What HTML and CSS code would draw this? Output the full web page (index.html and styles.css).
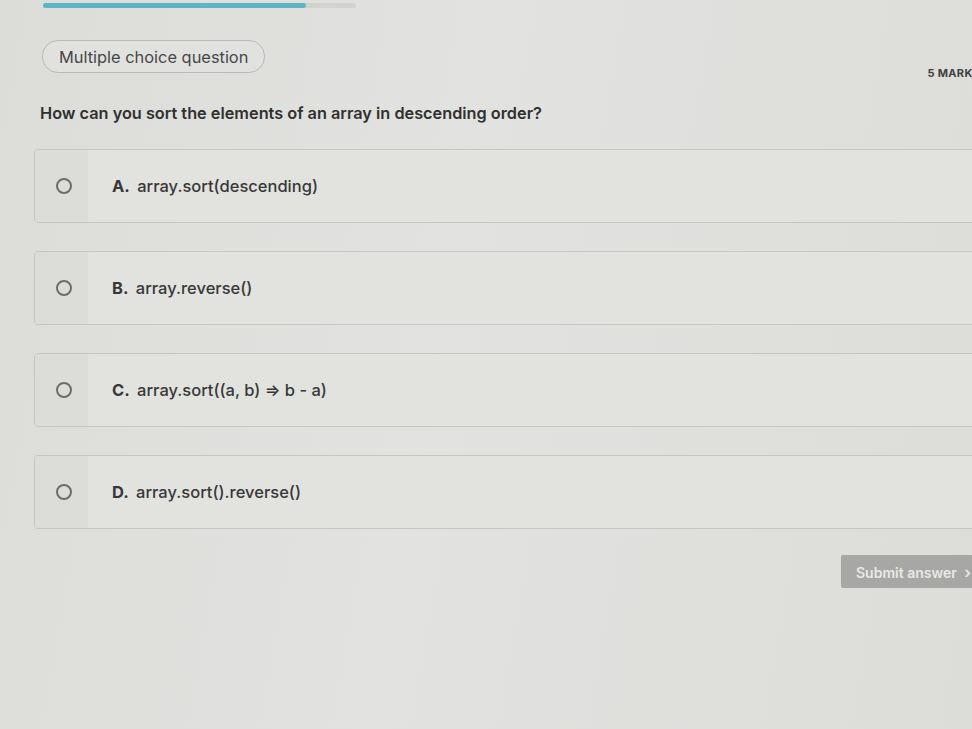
FILE: index.html
```html
<!DOCTYPE html>
<html>
<head>
<meta charset="utf-8">
<link rel="stylesheet" href="styles.css">
</head>
<body>
<div class="page">
  <div class="progress"><div class="progress-fill"></div></div>
  <div class="header">
    <span class="pill">Multiple choice question</span>
    <span class="marks">5 MARKS</span>
  </div>
  <p class="question">How can you sort the elements of an array in descending order?</p>
  <div class="options">
    <div class="option">
      <div class="radio-pane"><span class="radio"></span></div>
      <div class="label"><b>A.</b> array.sort(descending)</div>
    </div>
    <div class="option">
      <div class="radio-pane"><span class="radio"></span></div>
      <div class="label"><b>B.</b> array.reverse()</div>
    </div>
    <div class="option">
      <div class="radio-pane"><span class="radio"></span></div>
      <div class="label"><b>C.</b> array.sort((a, b) ⇒ b - a)</div>
    </div>
    <div class="option">
      <div class="radio-pane"><span class="radio"></span></div>
      <div class="label"><b>D.</b> array.sort().reverse()</div>
    </div>
  </div>
  <div class="actions">
    <button class="submit">Submit answer <span class="chev">›</span></button>
  </div>
</div>
</body>
</html>
```

FILE: styles.css
```css
html, body {
  margin: 0;
  padding: 0;
  height: 100%;
  overflow: hidden;
}
body {
  background: linear-gradient(100deg, #dcdcd9 0%, #e2e3e0 45%, #dcdcd9 100%);
  font-family: Inter, "Noto Sans", "Liberation Sans", sans-serif;
  color: #333;
}
.page {
  padding: 3px 0 0 34px;
}
.progress {
  margin-left: 9px;
  width: 313px;
  height: 5px;
  background: #d2d3d1;
  border-radius: 3px;
}
.progress-fill {
  width: 263px;
  height: 100%;
  background: #5db5c2;
  border-radius: 3px;
}
.header {
  display: flex;
  justify-content: space-between;
  align-items: flex-end;
  margin-top: 32px;
  margin-left: 8px;
}
.pill {
  display: inline-flex;
  align-items: center;
  height: 31px;
  padding: 0 16px;
  border: 1px solid #b9bab7;
  border-radius: 16px;
  background: #e1e2df;
  font-size: 16.4px;
  color: #474747;
}
.marks {
  font-size: 11px;
  font-weight: 700;
  color: #3f3f3f;
  letter-spacing: 0.3px;
  margin-right: -8px;
  margin-bottom: -7px;
}
.question {
  margin: 30px 0 0 6px;
  font-size: 16.3px;
  font-weight: 600;
  color: #303030;
}
.options {
  display: flex;
  flex-direction: column;
  gap: 28px;
  margin-top: 26px;
  margin-right: -10px;
}
.option {
  display: flex;
  align-items: center;
  height: 72px;
  border: 1px solid #c6c7c4;
  border-radius: 4px;
  background: #e2e2df;
  overflow: hidden;
}
.radio-pane {
  width: 53px;
  height: 100%;
  display: flex;
  align-items: center;
  justify-content: center;
  background: #dcdcd9;
}
.radio {
  width: 12px;
  height: 12px;
  border: 2px solid #6d6d6d;
  border-radius: 50%;
  box-sizing: content-box;
  margin-left: 4px;
}
.label {
  padding-left: 24px;
  font-size: 16.5px;
  font-weight: 500;
  color: #383838;
}
.label b {
  font-weight: 700;
  margin-right: 3px;
}
.actions {
  display: flex;
  justify-content: flex-end;
  margin-top: 26px;
  margin-right: -20px;
}
.submit {
  height: 33px;
  width: 151px;
  padding: 0 0 0 15px;
  text-align: left;
  border: none;
  border-radius: 2px;
  background: #a7a8a6;
  color: #e9e9e7;
  font-family: Inter, "Noto Sans", "Liberation Sans", sans-serif;
  font-size: 14px;
  font-weight: 600;
}
.chev {
  margin-left: 4px;
  font-size: 16px;
}
```
